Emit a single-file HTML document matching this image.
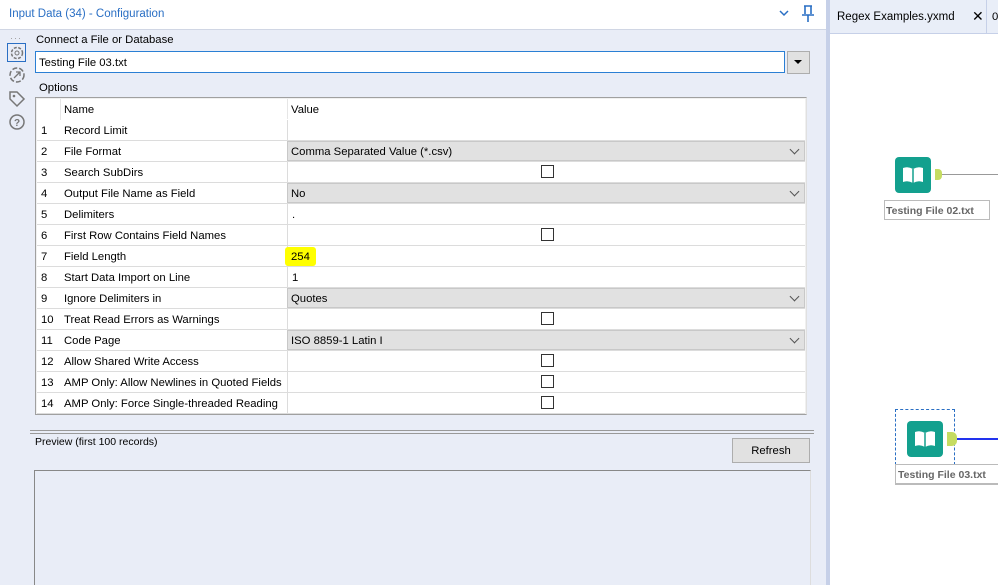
<!DOCTYPE html>
<html><head><style>
*{margin:0;padding:0;box-sizing:border-box}
html,body{width:998px;height:585px;overflow:hidden}
body{position:relative;background:#e9edf7;font-family:"Liberation Sans",sans-serif;font-size:11.3px;color:#000}
.a{position:absolute}
.row{position:absolute;left:37px;width:768px;height:21px;border-bottom:1px solid #dcdcdc;background:#fff}
.row span{position:absolute;top:5px}
.n{left:4px}.nm{left:27px}
.vc{position:absolute;left:250px;top:0;width:518px;height:20px;border-left:1px solid #dcdcdc}
.dd{background:#e1e1e1;border:1px solid #c8c8c8;left:250px}
.dd span{top:4px!important}
.cb{position:absolute;left:253px;top:3px;width:13px;height:13px;border:1px solid #333;background:#fff}
.chev{position:absolute;right:6px;top:4px;width:7px;height:7px;border-right:1px solid #555;border-bottom:1px solid #555;transform:rotate(45deg)}
</style></head><body>
<div class="a" style="left:0;top:0;width:826px;height:30px;background:#fff;border-bottom:1px solid #d0d6e4"></div>
<div class="a" style="left:9px;top:8px;color:#2a6fc4;font-size:11.5px">Input Data (34) - Configuration</div>
<svg class="a" style="left:778px;top:8px" width="12" height="10"><path d="M2 3l4 4 4-4" stroke="#2a6fc4" stroke-width="1.5" fill="none"/></svg>
<svg class="a" style="left:800px;top:4px" width="16" height="20"><path d="M4 2h8M5 2v8M11 2v8M2 11h12M8 11v7" stroke="#2a6fc4" stroke-width="1.6" fill="none"/></svg>
<div class="a" style="left:826px;top:0;width:4px;height:585px;background:#c6d0e8"></div>
<div class="a" style="left:830px;top:0;width:168px;height:585px;background:#fff"></div>
<div class="a" style="left:830px;top:0;width:168px;height:34px;background:#e9eef8;border-bottom:1px solid #c6d0e8"></div>
<div class="a" style="left:837px;top:11px;font-size:11.5px">Regex Examples.yxmd</div>
<div class="a" style="left:972px;top:8px;font-size:14px">✕</div>
<div class="a" style="left:986px;top:0;width:1px;height:34px;background:#c6d0e8"></div>
<div class="a" style="left:992px;top:11px">0</div>
<div class="a" style="left:895px;top:157px;width:36px;height:36px;background:#13a08e;border-radius:4px"></div>
<svg class="a" style="left:895px;top:157px" width="36" height="36"><path d="M8 11q5-2 10 1q5-3 10-1v14q-5-2-10 1q-5-3-10-1z" fill="#fff"/><path d="M18 12v14" stroke="#13a08e" stroke-width="1.5"/></svg>
<div class="a" style="left:935px;top:169px;width:7px;height:11px;background:#c5dc61;border-radius:0 4px 4px 0"></div>
<div class="a" style="left:942px;top:174px;width:56px;height:1px;background:#999"></div>
<div class="a" style="left:884px;top:200px;width:106px;height:20px;border:1px solid #bbb;color:#666;font-weight:bold;font-size:10.5px;padding:4px 0 0 1px">Testing File 02.txt</div>
<div class="a" style="left:895px;top:409px;width:60px;height:56px;border:1px dashed #2a6fc4"></div>
<div class="a" style="left:907px;top:421px;width:36px;height:36px;background:#13a08e;border-radius:4px"></div>
<svg class="a" style="left:907px;top:421px" width="36" height="36"><path d="M8 11q5-2 10 1q5-3 10-1v14q-5-2-10 1q-5-3-10-1z" fill="#fff"/><path d="M18 12v14" stroke="#13a08e" stroke-width="1.5"/></svg>
<div class="a" style="left:947px;top:432px;width:10px;height:14px;background:#c5dc61;border-radius:0 5px 5px 0"></div>
<div class="a" style="left:957px;top:438px;width:41px;height:2px;background:#2233ee"></div>
<div class="a" style="left:895px;top:464px;width:103px;height:21px;border:1px solid #bbb;border-right:none;border-bottom:2px solid #bbb;background:#fff;color:#666;font-weight:bold;font-size:10.5px;padding:4px 0 0 2px">Testing File 03.txt</div>
<div class="a" style="left:10px;top:33px;color:#999;font-size:9px;letter-spacing:1px">···</div>
<div class="a" style="left:7px;top:43px;width:19px;height:19px;border:1px solid #2a6fc4"></div>
<svg class="a" style="left:9px;top:45px" width="16" height="16"><circle cx="8" cy="8" r="5.5" stroke="#777" stroke-width="1.5" fill="none" stroke-dasharray="3 1.5"/><circle cx="8" cy="8" r="2" stroke="#777" fill="none"/></svg>
<svg class="a" style="left:8px;top:66px" width="18" height="18"><circle cx="9" cy="9" r="7" stroke="#777" stroke-width="1.5" fill="none" stroke-dasharray="5 2"/><path d="M6 12l6-6M8 6h4v4" stroke="#777" stroke-width="1.3" fill="none"/></svg>
<svg class="a" style="left:8px;top:90px" width="18" height="18"><path d="M2 2h7l7 7-7 7-7-7z" stroke="#777" stroke-width="1.5" fill="none"/><circle cx="6" cy="6" r="1.3" fill="#777"/></svg>
<svg class="a" style="left:8px;top:113px" width="18" height="18"><circle cx="9" cy="9" r="7" stroke="#777" stroke-width="1.5" fill="none"/><text x="9" y="13" text-anchor="middle" font-size="10" font-weight="bold" fill="#777" font-family="Liberation Sans">?</text></svg>
<div class="a" style="left:36px;top:34px">Connect a File or Database</div>
<div class="a" style="left:35px;top:51px;width:750px;height:22px;background:#fff;border:1px solid #2a7fd4;padding:5px 0 0 3px">Testing File 03.txt</div>
<div class="a" style="left:787px;top:51px;width:23px;height:23px;background:#e1e1e1;border:1px solid #adadad"></div>
<div class="a" style="left:794px;top:60px;width:0;height:0;border-left:4px solid transparent;border-right:4px solid transparent;border-top:4px solid #000"></div>
<div class="a" style="left:39px;top:82px">Options</div>
<div class="a" style="left:35px;top:97px;width:772px;height:318px;background:#f0f0f0;border:1px solid #a0a0a0;border-right-color:#e0e0e0"></div>
<div class="row" style="top:99px;border-bottom:none"><span class="nm">Name</span><div class="vc" style="border-color:#e6e6e6"><span style="left:3px">Value</span></div></div>
<div class="a" style="left:60px;top:99px;width:1px;height:21px;background:#e6e6e6"></div>
<div class="row" style="top:120px"><span class="n">1</span><span class="nm">Record Limit</span><div class="vc"></div></div>
<div class="row" style="top:141px"><span class="n">2</span><span class="nm">File Format</span><div class="vc dd"><span style="left:3px">Comma Separated Value (*.csv)</span><i class="chev"></i></div></div>
<div class="row" style="top:162px"><span class="n">3</span><span class="nm">Search SubDirs</span><div class="vc"><i class="cb"></i></div></div>
<div class="row" style="top:183px"><span class="n">4</span><span class="nm">Output File Name as Field</span><div class="vc dd"><span style="left:3px">No</span><i class="chev"></i></div></div>
<div class="row" style="top:204px"><span class="n">5</span><span class="nm">Delimiters</span><div class="vc"><span style="left:4px">.</span></div></div>
<div class="row" style="top:225px"><span class="n">6</span><span class="nm">First Row Contains Field Names</span><div class="vc"><i class="cb"></i></div></div>
<div class="row" style="top:246px"><span class="n">7</span><span class="nm">Field Length</span><div class="vc"><span style="left:-3px;top:1px;background:#ffff00;padding:4px 6px 3px 6px;border-radius:3px">254</span></div></div>
<div class="row" style="top:267px"><span class="n">8</span><span class="nm">Start Data Import on Line</span><div class="vc"><span style="left:4px">1</span></div></div>
<div class="row" style="top:288px"><span class="n">9</span><span class="nm">Ignore Delimiters in</span><div class="vc dd"><span style="left:3px">Quotes</span><i class="chev"></i></div></div>
<div class="row" style="top:309px"><span class="n">10</span><span class="nm">Treat Read Errors as Warnings</span><div class="vc"><i class="cb"></i></div></div>
<div class="row" style="top:330px"><span class="n">11</span><span class="nm">Code Page</span><div class="vc dd"><span style="left:3px">ISO 8859-1 Latin I</span><i class="chev"></i></div></div>
<div class="row" style="top:351px"><span class="n">12</span><span class="nm">Allow Shared Write Access</span><div class="vc"><i class="cb"></i></div></div>
<div class="row" style="top:372px"><span class="n">13</span><span class="nm">AMP Only: Allow Newlines in Quoted Fields</span><div class="vc"><i class="cb"></i></div></div>
<div class="row" style="top:393px"><span class="n">14</span><span class="nm">AMP Only: Force Single-threaded Reading</span><div class="vc"><i class="cb"></i></div></div>
<div class="a" style="left:30px;top:430px;width:784px;height:4px;border-top:1px solid #999;border-bottom:1px solid #999"></div>
<div class="a" style="left:35px;top:436px;font-size:10.5px">Preview (first 100 records)</div>
<div class="a" style="left:732px;top:438px;width:78px;height:25px;background:#e1e1e1;border:1px solid #adadad;text-align:center;padding-top:6px">Refresh</div>
<div class="a" style="left:34px;top:470px;width:777px;height:115px;border:1px solid #888;border-bottom:none;border-right-color:#ddd"></div>
</body></html>
